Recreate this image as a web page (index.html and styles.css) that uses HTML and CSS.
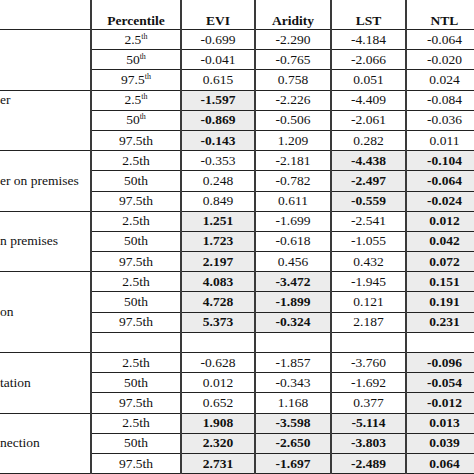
FILE: index.html
```html
<!DOCTYPE html>
<html>
<head>
<meta charset="utf-8">
<link rel="stylesheet" href="styles.css">
</head>
<body>
<div class="frame">
<table class="results">
<colgroup>
<col class="c-label"><col class="c-pct"><col class="c-evi"><col class="c-ari"><col class="c-lst"><col class="c-ntl">
</colgroup>
<thead>
<tr><th class="label"></th><th>Percentile</th><th>EVI</th><th>Aridity</th><th>LST</th><th>NTL</th></tr>
</thead>
<tbody>
<tr><td class="label" rowspan="3"></td><td>2.5<sup>th</sup></td><td>-0.699</td><td>-2.290</td><td>-4.184</td><td>-0.064</td></tr>
<tr><td>50<sup>th</sup></td><td>-0.041</td><td>-0.765</td><td>-2.066</td><td>-0.020</td></tr>
<tr class="end"><td>97.5<sup>th</sup></td><td>0.615</td><td>0.758</td><td>0.051</td><td>0.024</td></tr>

<tr><td class="label top" rowspan="3">er</td><td>2.5<sup>th</sup></td><td class="sig">-1.597</td><td>-2.226</td><td>-4.409</td><td>-0.084</td></tr>
<tr><td>50<sup>th</sup></td><td class="sig">-0.869</td><td>-0.506</td><td>-2.061</td><td>-0.036</td></tr>
<tr class="end"><td>97.5th</td><td class="sig">-0.143</td><td>1.209</td><td>0.282</td><td>0.011</td></tr>

<tr><td class="label" rowspan="3">er on premises</td><td>2.5th</td><td>-0.353</td><td>-2.181</td><td class="sig">-4.438</td><td class="sig">-0.104</td></tr>
<tr><td>50th</td><td>0.248</td><td>-0.782</td><td class="sig">-2.497</td><td class="sig">-0.064</td></tr>
<tr class="end"><td>97.5th</td><td>0.849</td><td>0.611</td><td class="sig">-0.559</td><td class="sig">-0.024</td></tr>

<tr><td class="label" rowspan="3">n premises</td><td>2.5th</td><td class="sig">1.251</td><td>-1.699</td><td>-2.541</td><td class="sig">0.012</td></tr>
<tr><td>50th</td><td class="sig">1.723</td><td>-0.618</td><td>-1.055</td><td class="sig">0.042</td></tr>
<tr class="end"><td>97.5th</td><td class="sig">2.197</td><td>0.456</td><td>0.432</td><td class="sig">0.072</td></tr>

<tr><td class="label" rowspan="4">on</td><td>2.5th</td><td class="sig">4.083</td><td class="sig">-3.472</td><td>-1.945</td><td class="sig">0.151</td></tr>
<tr><td>50th</td><td class="sig">4.728</td><td class="sig">-1.899</td><td>0.121</td><td class="sig">0.191</td></tr>
<tr><td>97.5th</td><td class="sig">5.373</td><td class="sig">-0.324</td><td>2.187</td><td class="sig">0.231</td></tr>
<tr class="end"><td></td><td></td><td></td><td></td><td></td></tr>

<tr><td class="label" rowspan="3">tation</td><td>2.5th</td><td>-0.628</td><td>-1.857</td><td>-3.760</td><td class="sig">-0.096</td></tr>
<tr><td>50th</td><td>0.012</td><td>-0.343</td><td>-1.692</td><td class="sig">-0.054</td></tr>
<tr class="end"><td>97.5th</td><td>0.652</td><td>1.168</td><td>0.377</td><td class="sig">-0.012</td></tr>

<tr><td class="label" rowspan="3">nection</td><td>2.5th</td><td class="sig">1.908</td><td class="sig">-3.598</td><td class="sig">-5.114</td><td class="sig">0.013</td></tr>
<tr><td>50th</td><td class="sig">2.320</td><td class="sig">-2.650</td><td class="sig">-3.803</td><td class="sig">0.039</td></tr>
<tr class="end"><td>97.5th</td><td class="sig">2.731</td><td class="sig">-1.697</td><td class="sig">-2.489</td><td class="sig">0.064</td></tr>
</tbody>
</table>
</div>
</body>
</html>
```
FILE: styles.css
```css
html, body {
  margin: 0;
  padding: 0;
  background: #ffffff;
}

.frame {
  width: 474px;
  height: 474px;
  overflow: hidden;
}

.results {
  border-collapse: collapse;
  table-layout: fixed;
  width: 482px;
  font-family: "Liberation Serif", "Times New Roman", serif;
  font-size: 13.5px;
  color: #111;
}

.c-label { width: 91px; }
.c-pct { width: 90px; }
.c-evi { width: 74px; }
.c-ari { width: 76px; }
.c-lst { width: 75px; }
.c-ntl { width: 76px; }

.results th {
  height: 28px;
  padding: 0 0 1px 0;
  vertical-align: bottom;
  font-weight: bold;
  text-align: center;
  line-height: 14px;
  border-left: 2px solid #3a3a3a;
  border-bottom: 1px solid #222;
}

.results td {
  height: 19.2px;
  padding: 0;
  text-align: center;
  vertical-align: middle;
  line-height: 14px;
  border-left: 2px solid #3a3a3a;
  border-top: 1px solid #222;
  border-bottom: 1px solid #222;
  white-space: nowrap;
}

.results th.label,
.results td.label {
  border-left: none;
  text-align: left;
  padding-left: 0;
}

.results td.label.top {
  vertical-align: top;
  padding-top: 2px;
}

.results td.sig {
  background: #ececec;
  font-weight: bold;
}

.results sup {
  font-size: 8px;
  line-height: 0;
  vertical-align: 5px;
}
```
